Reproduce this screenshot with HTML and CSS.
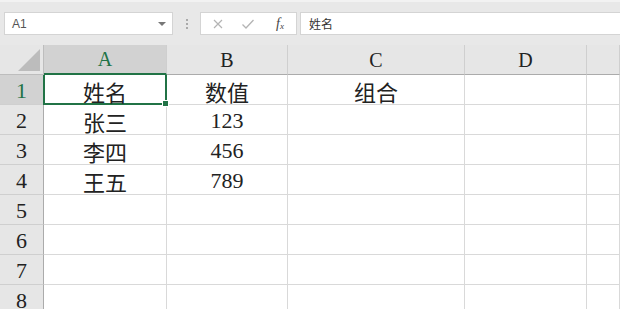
FILE: index.html
```html
<!DOCTYPE html>
<html lang="zh-CN">
  <head>
    <meta charset="UTF-8" />
    <meta name="viewport" content="width=device-width, initial-scale=1.0" />
    <title>Sheet1</title>
    <link rel="stylesheet" href="styles.css">
  </head>
  <body>
    <!-- Formula bar -->
    <div class="toolbar">
      <div class="namebox">
        <span>A1</span>
        <span class="arrow"></span>
      </div>
      <div class="dots"><i></i><i></i><i></i></div>
      <div class="fbuttons">
        <svg class="ico" width="12" height="12" viewBox="0 0 12 12"><path d="M2 2 L10 10 M10 2 L2 10" stroke="#b4b4b4" stroke-width="1.2" fill="none"/></svg>
        <svg class="ico" width="14" height="12" viewBox="0 0 14 12"><path d="M1.5 6.5 L5 10 L12.5 2" stroke="#b4b4b4" stroke-width="1.3" fill="none"/></svg>
        <span class="fx">f<sub>x</sub></span>
      </div>
      <div class="formula">姓名</div>
    </div>

    <!-- Sheet grid -->
    <div class="sheet">
      <div class="corner"><span class="tri"></span></div>
      <div class="colhead active">A</div>
      <div class="colhead">B</div>
      <div class="colhead">C</div>
      <div class="colhead">D</div>
      <div class="colhead"></div>

      <div class="rowhead active">1</div>
      <div class="cell selected">姓名<span class="handle"></span></div>
      <div class="cell">数值</div>
      <div class="cell">组合</div>
      <div class="cell"></div>
      <div class="cell"></div>

      <div class="rowhead">2</div>
      <div class="cell">张三</div>
      <div class="cell">123</div>
      <div class="cell"></div>
      <div class="cell"></div>
      <div class="cell"></div>

      <div class="rowhead">3</div>
      <div class="cell">李四</div>
      <div class="cell">456</div>
      <div class="cell"></div>
      <div class="cell"></div>
      <div class="cell"></div>

      <div class="rowhead">4</div>
      <div class="cell">王五</div>
      <div class="cell">789</div>
      <div class="cell"></div>
      <div class="cell"></div>
      <div class="cell"></div>

      <div class="rowhead">5</div>
      <div class="cell"></div><div class="cell"></div><div class="cell"></div><div class="cell"></div><div class="cell"></div>
      <div class="rowhead">6</div>
      <div class="cell"></div><div class="cell"></div><div class="cell"></div><div class="cell"></div><div class="cell"></div>
      <div class="rowhead">7</div>
      <div class="cell"></div><div class="cell"></div><div class="cell"></div><div class="cell"></div><div class="cell"></div>
      <div class="rowhead">8</div>
      <div class="cell"></div><div class="cell"></div><div class="cell"></div><div class="cell"></div><div class="cell"></div>
    </div>
  </body>
</html>
```

FILE: styles.css
```css
/* Page */
body {
  margin: 0;
  width: 620px;
  height: 309px;
  overflow: hidden;
  background: white;
  font-family: "Liberation Serif", "Noto Sans CJK SC", serif;
}

/* Formula bar */
.toolbar {
  height: 46px;
  box-sizing: border-box;
  background: #e8e8e8;
  border-top: 2px solid #f2f2f2;
  display: flex;
  align-items: flex-start;
  padding: 10px 0 0 4px;
  font-family: "Noto Sans CJK SC", "Liberation Sans", sans-serif;
}
.namebox {
  width: 169px;
  height: 23px;
  box-sizing: border-box;
  background: white;
  border: 1px solid #d4d4d4;
  display: flex;
  align-items: center;
  justify-content: space-between;
  padding: 0 6px 0 7px;
  font-family: "Liberation Sans", sans-serif;
  font-size: 12px;
  color: #555;
}
.arrow {
  width: 0;
  height: 0;
  border-left: 4px solid transparent;
  border-right: 4px solid transparent;
  border-top: 4px solid #777;
}
.dots {
  width: 27px;
  height: 23px;
  display: flex;
  flex-direction: column;
  align-items: center;
  justify-content: center;
  gap: 2px;
}
.dots i {
  width: 2px;
  height: 2px;
  background: #aaa;
}
.fbuttons {
  width: 97px;
  height: 23px;
  box-sizing: border-box;
  background: white;
  border: 1px solid #d4d4d4;
  display: flex;
  align-items: center;
  padding: 0 8px 0 11px;
  gap: 17px;
}
.fx {
  font-family: "Liberation Serif", serif;
  font-style: italic;
  font-size: 14px;
  color: #444;
  margin-left: 4px;
}
.fx sub {
  font-size: 9px;
  vertical-align: -1px;
}
.formula {
  margin-left: 3px;
  flex: 1;
  height: 23px;
  box-sizing: border-box;
  background: white;
  border: 1px solid #d4d4d4;
  border-right: none;
  padding: 0 8px;
  font-size: 12px;
  line-height: 21px;
  color: #333;
}

/* Grid */
.sheet {
  display: grid;
  grid-template-columns: 44px 123px 121px 177px 122px 1fr;
  grid-auto-rows: 30px;
  margin-top: -1px;
}
.sheet > div {
  box-sizing: border-box;
  display: flex;
  align-items: center;
  justify-content: center;
  font-size: 22px;
  color: #222;
  padding-top: 3px;
}
.corner {
  background: #e6e6e6;
  border-right: 1px solid #bdbdbd;
  border-bottom: 1px solid #bdbdbd;
  position: relative;
}
.tri {
  position: absolute;
  right: 3px;
  bottom: 3px;
  width: 0;
  height: 0;
  border-left: 22px solid transparent;
  border-bottom: 22px solid #bcbcbc;
}
.sheet > .colhead {
  background: #e6e6e6;
  border-right: 1px solid #cfcfcf;
  border-bottom: 1px solid #ababab;
  font-size: 20px;
  padding-top: 1px;
}
.rowhead {
  background: #e6e6e6;
  border-right: 1px solid #ababab;
  border-bottom: 1px solid #cfcfcf;
}
.sheet > .active {
  background: #d2d2d2;
  color: #217346;
}
.sheet > .colhead.active {
  border-bottom: 2px solid #217346;
}
.cell {
  border-right: 1px solid #d9d9d9;
  border-bottom: 1px solid #d9d9d9;
}
.sheet > .selected {
  border: 2px solid #217346;
  border-top: none;
  margin-left: -1px;
  position: relative;
}
.handle {
  position: absolute;
  right: -4px;
  bottom: -4px;
  width: 5px;
  height: 5px;
  background: #217346;
  border: 1px solid white;
}
```
